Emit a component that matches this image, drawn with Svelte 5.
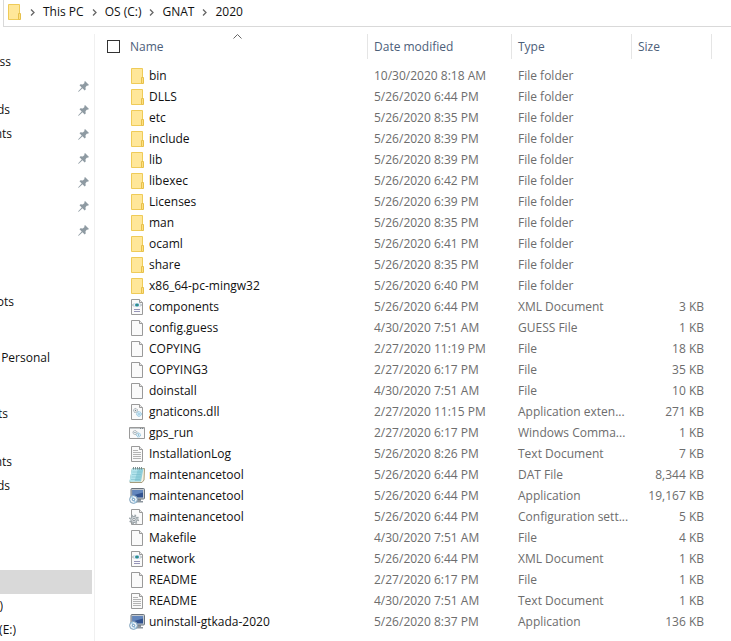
<script lang="ts">
	type Kind =
		| 'folder'
		| 'xml'
		| 'file'
		| 'dll'
		| 'cmd'
		| 'text'
		| 'dat'
		| 'app'
		| 'config';

	type Entry = {
		name: string;
		date: string;
		type: string;
		size?: string;
		kind: Kind;
	};

	type NavItem = {
		label?: string;
		// right edge of the label in the scrolled pane
		end?: number;
		pinned?: boolean;
		selected?: boolean;
	};

	const crumbs = ['This PC', 'OS (C:)', 'GNAT', '2020'];

	const folder = (name: string, date: string): Entry => ({
		name,
		date,
		type: 'File folder',
		kind: 'folder'
	});

	const file = (name: string, date: string, type: string, size: string, kind: Kind): Entry => ({
		name,
		date,
		type,
		size,
		kind
	});

	const entries: Entry[] = [
		folder('bin', '10/30/2020 8:18 AM'),
		folder('DLLS', '5/26/2020 6:44 PM'),
		folder('etc', '5/26/2020 8:35 PM'),
		folder('include', '5/26/2020 8:39 PM'),
		folder('lib', '5/26/2020 8:39 PM'),
		folder('libexec', '5/26/2020 6:42 PM'),
		folder('Licenses', '5/26/2020 6:39 PM'),
		folder('man', '5/26/2020 8:35 PM'),
		folder('ocaml', '5/26/2020 6:41 PM'),
		folder('share', '5/26/2020 8:35 PM'),
		folder('x86_64-pc-mingw32', '5/26/2020 6:40 PM'),
		file('components', '5/26/2020 6:44 PM', 'XML Document', '3 KB', 'xml'),
		file('config.guess', '4/30/2020 7:51 AM', 'GUESS File', '1 KB', 'file'),
		file('COPYING', '2/27/2020 11:19 PM', 'File', '18 KB', 'file'),
		file('COPYING3', '2/27/2020 6:17 PM', 'File', '35 KB', 'file'),
		file('doinstall', '4/30/2020 7:51 AM', 'File', '10 KB', 'file'),
		file('gnaticons.dll', '2/27/2020 11:15 PM', 'Application exten...', '271 KB', 'dll'),
		file('gps_run', '2/27/2020 6:17 PM', 'Windows Comma...', '1 KB', 'cmd'),
		file('InstallationLog', '5/26/2020 8:26 PM', 'Text Document', '7 KB', 'text'),
		file('maintenancetool', '5/26/2020 6:44 PM', 'DAT File', '8,344 KB', 'dat'),
		file('maintenancetool', '5/26/2020 6:44 PM', 'Application', '19,167 KB', 'app'),
		file('maintenancetool', '5/26/2020 6:44 PM', 'Configuration sett...', '5 KB', 'config'),
		file('Makefile', '4/30/2020 7:51 AM', 'File', '4 KB', 'file'),
		file('network', '5/26/2020 6:44 PM', 'XML Document', '1 KB', 'xml'),
		file('README', '2/27/2020 6:17 PM', 'File', '1 KB', 'file'),
		file('README', '4/30/2020 7:51 AM', 'Text Document', '1 KB', 'text'),
		file('uninstall-gtkada-2020', '5/26/2020 8:37 PM', 'Application', '136 KB', 'app')
	];

	const navGroups: NavItem[][] = [
		[
			{ label: 'ss', end: 11 },
			{ pinned: true },
			{ label: 'ds', end: 10, pinned: true },
			{ label: 'nts', end: 12, pinned: true },
			{ pinned: true },
			{ pinned: true },
			{ pinned: true },
			{ pinned: true },
			{},
			{},
			{ label: 'ots', end: 14 },
			{}
		],
		[{ label: 'Personal', end: 50 }],
		[
			{},
			{ label: 'ts', end: 8 },
			{},
			{ label: 'nts', end: 12 },
			{ label: 'ds', end: 10 },
			{},
			{},
			{},
			{ selected: true },
			{ label: ')', end: 3 },
			{ label: '(E:)', end: 16 }
		]
	];

	let allSelected = $state(false);
</script>

{#snippet page()}
	<path d="M2.5.5h8l3 3v12h-11z" fill="#fafafa" stroke="#9a9a9a" />
	<path d="M10.5.5v3h3" fill="#e8e8e8" stroke="#9a9a9a" />
{/snippet}

{#snippet gears()}
	<circle cx="6.5" cy="6.5" r="2" fill="#eef1f3" stroke="#9aa5ab" stroke-dasharray="1.2 .4" />
	<circle cx="6.5" cy="6.5" r=".7" fill="#7a868c" />
	<circle cx="10" cy="10" r="2.3" fill="#d9effa" stroke="#86bcd8" stroke-dasharray="1.3 .4" />
	<circle cx="10" cy="10" r=".7" fill="#5c9fc4" />
{/snippet}

{#snippet icon(kind: Kind)}
	<svg class="icon" viewBox="0 0 16 16" aria-hidden="true">
		{#if kind === 'folder'}
			<path d="M2.5.5h11v15h-11z" fill="#ffe799" stroke="#efcb58" />
			<path d="M12.5 9.5h2v6h-2z" fill="#ffe07e" stroke="#e6c04c" />
		{:else if kind === 'xml'}
			{@render page()}
			<path d="M5 4.500 3.500 6 5 7.500M11 4.500 12.500 6 11 7.500" fill="none" stroke="#7d8f9c" stroke-width=".8" />
			<ellipse cx="8" cy="6" rx="2.300" ry="1.800" fill="#4a9dc0" />
			<circle cx="8" cy="6" r="1" fill="#2f8a6a" />
			<path d="M5 10.500h6M5 12.500h6" stroke="#9694b8" />
		{:else if kind === 'file'}
			{@render page()}
		{:else if kind === 'dll'}
			{@render page()}
			{@render gears()}
		{:else if kind === 'cmd'}
			<path d="M.5 2.500h15v11H.5z" fill="#fafafa" stroke="#9a9a9a" />
			<path d="M1 3.500h14" stroke="#c3c8cb" />
			<path d="M11 3.500h1M13 3.500h1" stroke="#7d878d" />
			<circle cx="6" cy="7.500" r="2" fill="#edf0f1" stroke="#9aa5ab" stroke-dasharray="1.200 .4" />
			<circle cx="9.500" cy="10" r="2" fill="#d9effa" stroke="#86bcd8" stroke-dasharray="1.200 .4" />
			<path d="M5.500 7.500h1M9 10h1" stroke="#6f8b99" />
		{:else if kind === 'text'}
			{@render page()}
			<path d="M4 4.500h5M4 6.500h8M4 8.500h8M4 10.500h8M4 12.500h8" stroke="#b4b4b4" />
		{:else if kind === 'dat'}
			<path d="M3.500 1.500h12L15 13l-2 2.500H1z" fill="#f6f3e4" stroke="#a59c7c" />
			<path d="M3 1.500h11.500L12 14.500H.5z" fill="#8fcfdb" />
			<path d="M3 1.500h6L5.500 14.500h-5z" fill="#b4e4ec" />
			<path d="M3.500 5h9M3 7.500h9M2.500 10h9M2 12.500h9" stroke="#74b8c6" stroke-width=".5" />
			<path d="M4.500 0v2.500M6.500 0v2.500M8.500 0v2.500M10.500 0v2.500M12.500 0v2.500" stroke="#6e8286" stroke-width=".9" />
		{:else if kind === 'app'}
			<path d="M8 11h4v2h2v1.500H7V13h1z" fill="#8c959d" />
			<rect x="2" y=".500" width="13.500" height="10.500" rx="1" fill="#c3c9cf" stroke="#6b747e" />
			<path d="M3.500 2h10.500v7.500H3.500z" fill="#31528f" />
			<path d="M3.500 2h10.500v2.500L3.500 7.500z" fill="#6286bd" />
			<circle cx="4.500" cy="11.500" r="3.900" fill="#e9f1f7" stroke="#7c9fba" />
			<path d="M4.500 11.500 1.800 9l2-1.200zM4.500 11.500 7.200 14l-2 1.200z" fill="#a9d0e8" />
			<circle cx="4.500" cy="11.500" r="1.200" fill="#fff" stroke="#5b8fb8" />
		{:else}
			{@render page()}
			<circle cx="5" cy="10.500" r="4.200" fill="none" stroke="#9aa3a8" stroke-width="1.600" stroke-dasharray="1.600 1.700" />
			<circle cx="5" cy="10.500" r="3.200" fill="#d2d7da" stroke="#9aa3a8" />
			<circle cx="5" cy="10.500" r="1.200" fill="#fff" stroke="#8b959b" />
		{/if}
	</svg>
{/snippet}

{#snippet pin()}
	<svg class="pin" viewBox="0 0 11 11" role="img" aria-label="Pinned">
		<path
			d="M7 0l4 4-1.300.700-.7-.2-1.500 1.700.2 2.300-1 1-2.200-2.200L1 10.500l-1 .5.500-1 3.200-3.500L1.500 4.300l1-1 2.300.2L6.500 2l-.200-.900z"
			fill="#8e9aa2"
		/>
	</svg>
{/snippet}

<div class="explorer">
	<nav class="address" aria-label="Address">
		{@render icon('folder')}
		{#each crumbs as crumb (crumb)}
			<svg class="chevron" viewBox="0 0 5 7" aria-hidden="true">
				<path d="M1 .5l3 3-3 3" fill="none" stroke="#666" stroke-width="1.300" />
			</svg>
			<button type="button">{crumb}</button>
		{/each}
	</nav>

	<div class="body">
		<nav class="sidebar" aria-label="Navigation pane">
			{#each navGroups as group, g (g)}
				<ul>
					{#each group as item, i (i)}
						<li class:selected={item.selected}>
							{#if item.label}
								<span class="nav-label" style={`width: ${item.end}px`}>{item.label}</span>
							{/if}
							{#if item.pinned}
								{@render pin()}
							{/if}
						</li>
					{/each}
				</ul>
			{/each}
		</nav>

		<main>
			<table>
				<colgroup>
					<col class="col-name" />
					<col class="col-date" />
					<col class="col-type" />
					<col class="col-size" />
					<col />
				</colgroup>
				<thead>
					<tr>
						<th scope="col" aria-sort="ascending">
							<div class="name-header">
								<input type="checkbox" aria-label="Select all" bind:checked={allSelected} />
								<span>Name</span>
							</div>
							<svg class="sort" viewBox="0 0 9 5" aria-hidden="true">
								<path d="M.5 4.500l4-4 4 4" fill="none" stroke="#666" />
							</svg>
						</th>
						<th scope="col">Date modified</th>
						<th scope="col">Type</th>
						<th scope="col">Size</th>
						<td></td>
					</tr>
				</thead>
				<tbody>
					{#each entries as entry, i (i)}
						<tr>
							<td>
								<div class="name">
									{@render icon(entry.kind)}
									<span>{entry.name}</span>
								</div>
							</td>
							<td>{entry.date}</td>
							<td>{entry.type}</td>
							<td class="size">{entry.size ?? ''}</td>
							<td></td>
						</tr>
					{/each}
				</tbody>
			</table>
		</main>
	</div>
</div>

<style>
	:global(body) {
		margin: 0;
		background: #fff;
	}

	.explorer {
		font-family: 'Open Sans', 'Noto Sans', sans-serif;
		font-size: 12px;
		line-height: 16px;
		color: #111;
		overflow: hidden;
	}

	.address {
		display: flex;
		align-items: center;
		height: 27px;
		margin-left: 3px;
		padding: 0 2px 2px;
		box-sizing: border-box;
		border-left: 1px solid #d9d9d9;
		border-bottom: 1px solid #d9d9d9;
	}

	.address button {
		padding: 0;
		border: 0;
		background: none;
		font: inherit;
		color: inherit;
	}

	.chevron {
		flex: none;
		width: 5px;
		height: 7px;
		margin: 0 8px;
	}

	.icon {
		flex: none;
		width: 16px;
		height: 16px;
	}

	.body {
		display: flex;
		padding-top: 7px;
	}

	.sidebar {
		flex: none;
		width: 94px;
		padding-top: 16px;
		border-right: 1px solid #f0f0f0;
		box-sizing: content-box;
	}

	.sidebar ul {
		list-style: none;
		margin: 0 0 8px;
		padding: 0;
	}

	.sidebar ul:last-child {
		margin-bottom: 0;
	}

	.sidebar li {
		display: flex;
		align-items: center;
		height: 24px;
		margin-right: 2px;
	}

	.sidebar .selected {
		background: #d9d9d9;
	}

	.nav-label {
		display: flex;
		justify-content: flex-end;
		overflow: hidden;
		white-space: nowrap;
	}

	.pin {
		width: 11px;
		height: 11px;
		margin-left: auto;
		margin-right: 3px;
	}

	main {
		flex: 1;
		min-width: 0;
	}

	table {
		width: 100%;
		table-layout: fixed;
		border-collapse: separate;
		border-spacing: 0;
	}

	.col-name {
		width: 273px;
	}

	.col-date {
		width: 144px;
	}

	.col-type {
		width: 120px;
	}

	.col-size {
		width: 80px;
	}

	th,
	td {
		padding: 0 0 0 6px;
		text-align: left;
		white-space: nowrap;
	}

	th {
		position: relative;
		height: 25px;
		border-right: 1px solid #e5e5e5;
		font-weight: 400;
		color: #4c607a;
	}

	.name-header {
		display: flex;
		align-items: center;
		gap: 10px;
		padding-left: 6px;
	}

	.name-header input {
		appearance: none;
		width: 13px;
		height: 13px;
		margin: 0;
		border: 1px solid #333;
		background: #fff;
	}

	.name-header input:checked {
		background: #4c607a;
	}

	.sort {
		position: absolute;
		top: 0;
		left: calc(50% + 2px);
		width: 9px;
		height: 5px;
	}

	/* space between the header and the first row */
	tbody::before {
		content: '';
		display: block;
		height: 6px;
	}

	tbody td {
		height: 21px;
		color: #6d6d6d;
	}

	.name {
		display: flex;
		align-items: center;
		gap: 4px;
		padding-left: 28px;
		color: #111;
	}

	.size {
		padding: 0 8px 0 0;
		text-align: right;
	}
</style>
